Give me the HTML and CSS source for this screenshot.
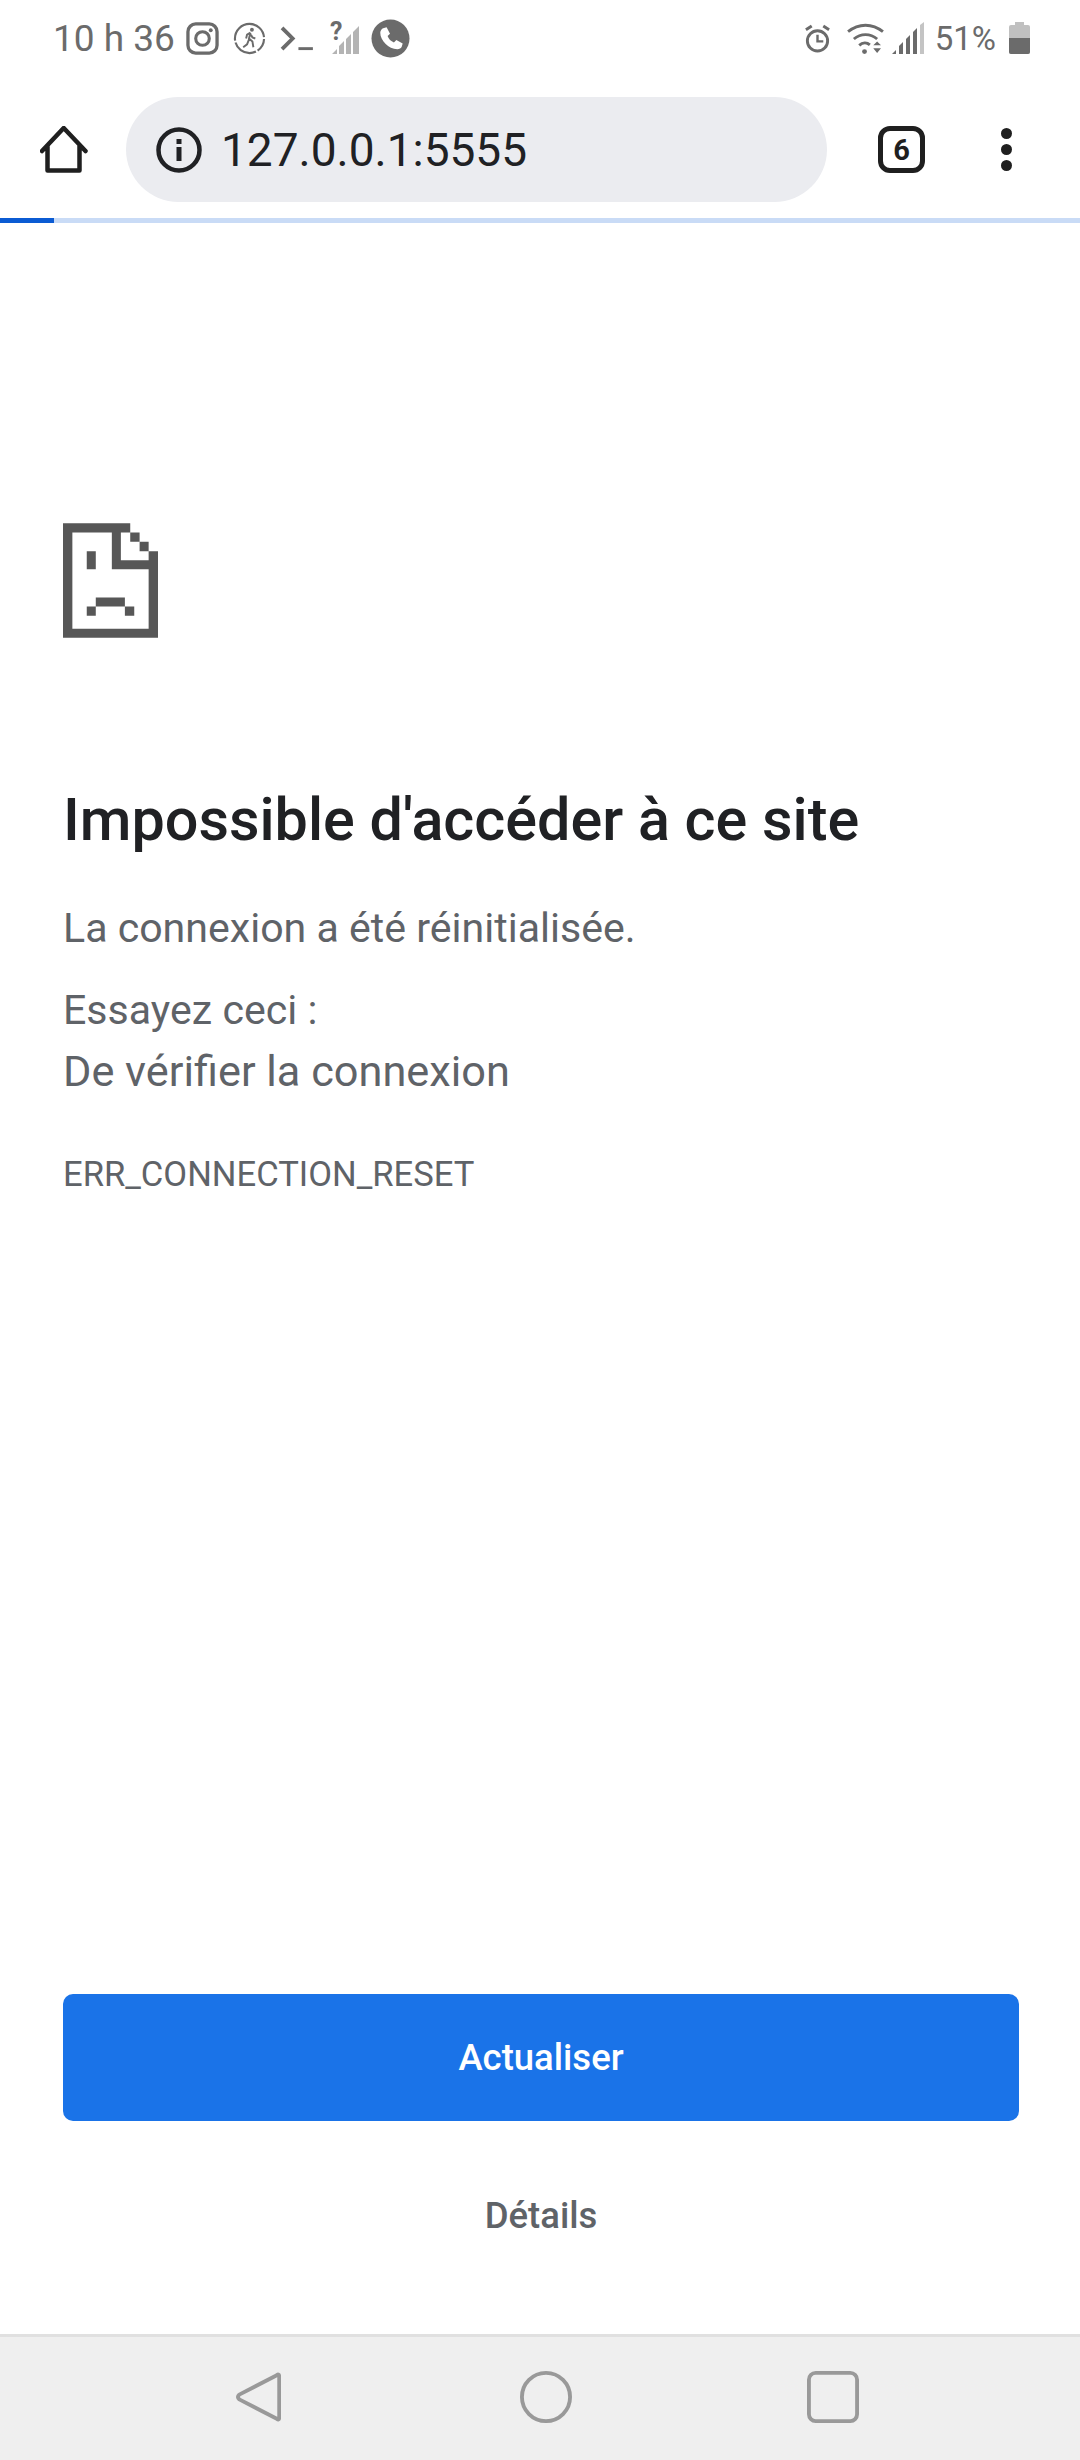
FILE: index.html
```html
<!DOCTYPE html>
<html lang="fr">
<head>
<meta charset="UTF-8">
<meta name="viewport" content="width=device-width, initial-scale=1.0">
<title>127.0.0.1</title>
<link rel="stylesheet" href="styles.css">
</head>
<body>
  <div class="status-bar">
    <div class="status-left">
      <span class="status-time">10 h 36</span>
      <!-- instagram -->
      <svg class="ic-insta" viewBox="0 0 34 34"><rect x="2" y="2" width="30" height="30" rx="8" fill="none" stroke="#6b6b6b" stroke-width="3.4"/><circle cx="17" cy="17" r="7" fill="none" stroke="#6b6b6b" stroke-width="3.2"/><circle cx="25.5" cy="8.5" r="2" fill="#6b6b6b"/></svg>
      <!-- walking -->
      <svg class="ic-walk" viewBox="0 0 34 34"><path d="M17 2a15 15 0 0 1 15 15 15 15 0 0 1-15 15A15 15 0 0 1 2 17 15 15 0 0 1 17 2z" fill="none" stroke="#6b6b6b" stroke-width="2.2" stroke-dasharray="22 2 14 2 26 2 26"/><circle cx="19.5" cy="8" r="2" fill="#6b6b6b"/><path d="M18 11l-3.5 2-1 4M18 11l-1.500 6 3.500 3 1 6M16.500 18l-2 5-4 3M18.500 13l1.500 3 3 1" fill="none" stroke="#6b6b6b" stroke-width="2"/></svg>
      <!-- terminal -->
      <svg class="ic-term" viewBox="0 0 34 28"><path d="M2 3l11 11L2 25" fill="none" stroke="#6b6b6b" stroke-width="4"/><rect x="19" y="23" width="15" height="3" fill="#6b6b6b"/></svg>
      <!-- sim signal -->
      <div class="sim">
        <svg class="ic-sim" viewBox="0 0 28 32"><path d="M1 32l5-5v5zM8 32v-8l5-5v13zM15 32V17l5-5v20zM22 32V10l6-6v28z" fill="#b4b4b4"/></svg>
        <span class="sim-mark">?</span>
      </div>
      <!-- call -->
      <svg class="ic-call" viewBox="0 0 40 40"><circle cx="20" cy="20" r="19.500" fill="#6b6b6b"/><path d="M12.500 9.500l3.500-1 3.500 6.500-2.500 2.500c1 3 3.500 5.500 6.500 6.500l2.500-2.500 6.500 3.500-1 3.500c-.5 1.500-2.500 2.500-4.500 2.500C18 30.500 9.500 22 9.500 14c0-2 1.500-4 3-4.500z" fill="#fff"/></svg>
    </div>
    <div class="status-right">
      <!-- alarm -->
      <svg class="ic-alarm" viewBox="0 0 28 30"><circle cx="14" cy="17.500" r="10.500" fill="none" stroke="#6b6b6b" stroke-width="3"/><path d="M14 11v7h6" fill="none" stroke="#6b6b6b" stroke-width="2.500"/><path d="M2 6l6-4M26 6l-6-4" stroke="#6b6b6b" stroke-width="3"/></svg>
      <!-- wifi -->
      <svg class="ic-wifi" viewBox="0 0 40 32"><path d="M2 9c11-9 25-9 36 0M8 16.500c7-6 17-6 24 0M13.500 23c3.500-3 8-3 11-.5" fill="none" stroke="#6b6b6b" stroke-width="3"/><circle cx="19" cy="29.500" r="2.500" fill="#6b6b6b"/><path d="M28 23l4-4 4 4zM28 26h8l-4 5z" fill="#6b6b6b"/></svg>
      <!-- signal -->
      <svg class="ic-signal" viewBox="0 0 32 32"><path d="M0 32l4-4v4zM7 32v-8l4-4v12zM14 32V17l4-4v19zM21 32V10l4-4v26z" fill="#6b6b6b"/><path d="M28 32V3l4-3v32z" fill="#c4c4c4"/></svg>
      <span class="status-batt">51%</span>
      <div class="battery"><div class="battery-fill"></div></div>
    </div>
  </div>

  <div class="toolbar">
    <svg class="ic-home" viewBox="0 0 48 47"><path d="M2 25L23.700 2 45.500 25M7.500 19.500V44.500H39.500V19.500" fill="none" stroke="#1f1f1f" stroke-width="4.500" stroke-linejoin="round" stroke-linecap="round"/></svg>
    <div class="url-pill">
      <svg class="ic-info" viewBox="0 0 46 46"><circle cx="23" cy="23" r="20.500" fill="none" stroke="#202124" stroke-width="4.500"/><rect x="20.500" y="20" width="5" height="14" fill="#202124"/><rect x="20.500" y="12" width="5" height="5" fill="#202124"/></svg>
      <span class="url-text">127.0.0.1:5555</span>
    </div>
    <div class="tab-count">6</div>
    <div class="menu-dots"><span></span><span></span><span></span></div>
  </div>
  <div class="progress"><div class="progress-done"></div></div>

  <div class="page">
    <div class="error-main">
      <!-- sad file icon -->
      <svg class="ic-file" viewBox="69 70 284 343"><path fill="#575757" fill-rule="evenodd" d="M69 70H270V98H298V126H325V154H353V413H69ZM97 98V386H325V208H215V98ZM242 98V181H325V154H298V126H270V98Z"/><path fill="#575757" d="M140 154H167V208H140ZM167 292H254V319H167ZM140 319H167V347H140ZM254 319H282V347H254Z"/></svg>
      <h1>Impossible d'accéder à ce site</h1>
      <p class="reason">La connexion a été réinitialisée.</p>
      <p class="try">Essayez ceci :</p>
      <p class="try-item">De vérifier la connexion</p>
      <div class="err-code">ERR_CONNECTION_RESET</div>
    </div>
    <div class="actions">
      <button class="reload">Actualiser</button>
      <button class="details">Détails</button>
    </div>
  </div>

  <div class="nav-bar">
    <svg class="ic-back" viewBox="0 0 46 54"><path d="M42 4.500c1-1.500 2.500-1 2.500 1v43c0 2-1.500 2.500-2.500 1L3 29.500c-1.500-1.500-1.500-3.500 0-5z" fill="none" stroke="#999" stroke-width="4" stroke-linejoin="round"/></svg>
    <svg class="ic-circle" viewBox="0 0 54 54"><circle cx="27" cy="27" r="25" fill="none" stroke="#999" stroke-width="4"/></svg>
    <svg class="ic-square" viewBox="0 0 54 54"><rect x="2" y="2" width="50" height="50" rx="7" fill="none" stroke="#999" stroke-width="4"/></svg>
  </div>
</body>
</html>
```

FILE: styles.css
```css
html, body { margin: 0; padding: 0; }
body {
  width: 1080px;
  height: 2460px;
  display: flex;
  flex-direction: column;
  background: #fff;
  font-family: Roboto, "Liberation Sans", sans-serif;
  overflow: hidden;
}
svg { display: block; flex-shrink: 0; }

/* status bar */
.status-bar {
  height: 76px;
  display: flex;
  justify-content: space-between;
  align-items: center;
  padding: 0 50px 0 53px;
  color: #6b6b6b;
}
.status-left, .status-right { display: flex; align-items: center; }
.status-time { font-size: 37px; margin-right: 11px; }
.ic-insta { width: 33px; height: 33px; margin-right: 14px; }
.ic-walk { width: 33px; height: 33px; margin-right: 14px; }
.ic-term { width: 33px; height: 27px; margin-right: 18px; }
.sim { position: relative; margin-right: 12px; }
.ic-sim { width: 28px; height: 32px; }
.sim-mark {
  position: absolute;
  top: -2px;
  left: -1px;
  font-size: 25px;
  line-height: 24px;
  font-weight: 700;
  color: #6b6b6b;
}
.ic-call { width: 39px; height: 39px; }
.ic-alarm { width: 27px; height: 29px; margin-right: 15px; }
.ic-wifi { width: 39px; height: 31px; margin-right: 7px; }
.ic-signal { width: 32px; height: 32px; margin-right: 11px; }
.status-batt { font-size: 33px; margin-right: 13px; }
.battery { width: 21px; height: 29px; margin-top: 3px; background: #c0c0c0; border-radius: 2px; position: relative; }
.battery::before { content: ""; position: absolute; top: -3px; left: 6px; width: 9px; height: 3px; background: #c0c0c0; }
.battery-fill { position: absolute; left: 0; right: 0; bottom: 0; height: 16px; background: #6b6b6b; border-radius: 0 0 2px 2px; }

/* chrome toolbar */
.toolbar {
  height: 142px;
  display: flex;
  align-items: center;
  box-sizing: border-box;
  padding: 5px 0 0 40px;
}
.ic-home { width: 48px; height: 47px; margin-right: 38px; }
.url-pill {
  width: 701px;
  height: 105px;
  border-radius: 53px;
  background: #ebecf0;
  display: flex;
  align-items: center;
  box-sizing: border-box;
  padding-left: 30px;
}
.ic-info { width: 46px; height: 46px; margin-right: 19px; }
.url-text { font-size: 46px; color: #202124; }
.tab-count {
  width: 47px;
  height: 47px;
  margin-left: 51px;
  box-sizing: border-box;
  border: 5px solid #1f1f1f;
  border-radius: 12px;
  display: flex;
  align-items: center;
  justify-content: center;
  font-family: Roboto, sans-serif;
  font-size: 29px;
  font-weight: 700;
  color: #1f1f1f;
}
.menu-dots { margin-left: 76px; display: flex; flex-direction: column; gap: 5px; }
.menu-dots span { width: 11px; height: 11px; border-radius: 50%; background: #1f1f1f; }
.progress { height: 5px; background: #c9dbf6; margin-top: 0; }
.progress-done { width: 54px; height: 5px; background: #0b5bd3; }

/* error page */
.page {
  flex: 1;
  display: flex;
  flex-direction: column;
  justify-content: space-between;
  padding: 300px 61px 0 63px;
}
.ic-file { width: 95px; height: 115px; }
h1 {
  margin: 149px 0 0;
  font-size: 59.3px;
  line-height: 66px;
  font-weight: 500;
  color: #202124;
}
.reason, .try, .try-item {
  margin: 0;
  font-size: 41.1px;
  line-height: 61px;
  color: #5f6368;
}
.try-item { font-size: 43.3px; }
.reason { margin-top: 45px; }
.try { margin-top: 21px; }
.err-code {
  margin-top: 52px;
  font-size: 34.6px;
  line-height: 40px;
  color: #5f6368;
}
.actions { display: flex; flex-direction: column; padding-bottom: 67px; }
.reload {
  height: 127px;
  border: none;
  border-radius: 10px;
  background: #1a73e8;
  color: #fff;
  font: 500 36.5px Roboto, sans-serif;
}
.details {
  height: 104px;
  margin-top: 42px;
  border: none;
  background: none;
  color: #5f6368;
  font: 500 36.5px Roboto, sans-serif;
}

/* android nav */
.nav-bar {
  height: 126px;
  box-sizing: border-box;
  border-top: 3px solid #e0e0e0;
  background: #efefef;
  display: flex;
  align-items: center;
  padding: 0 0 3px 236px;
}
.ic-back { width: 45px; height: 52px; margin-right: 239px; }
.ic-circle { width: 52px; height: 52px; margin-right: 235px; }
.ic-square { width: 52px; height: 52px; }
```
